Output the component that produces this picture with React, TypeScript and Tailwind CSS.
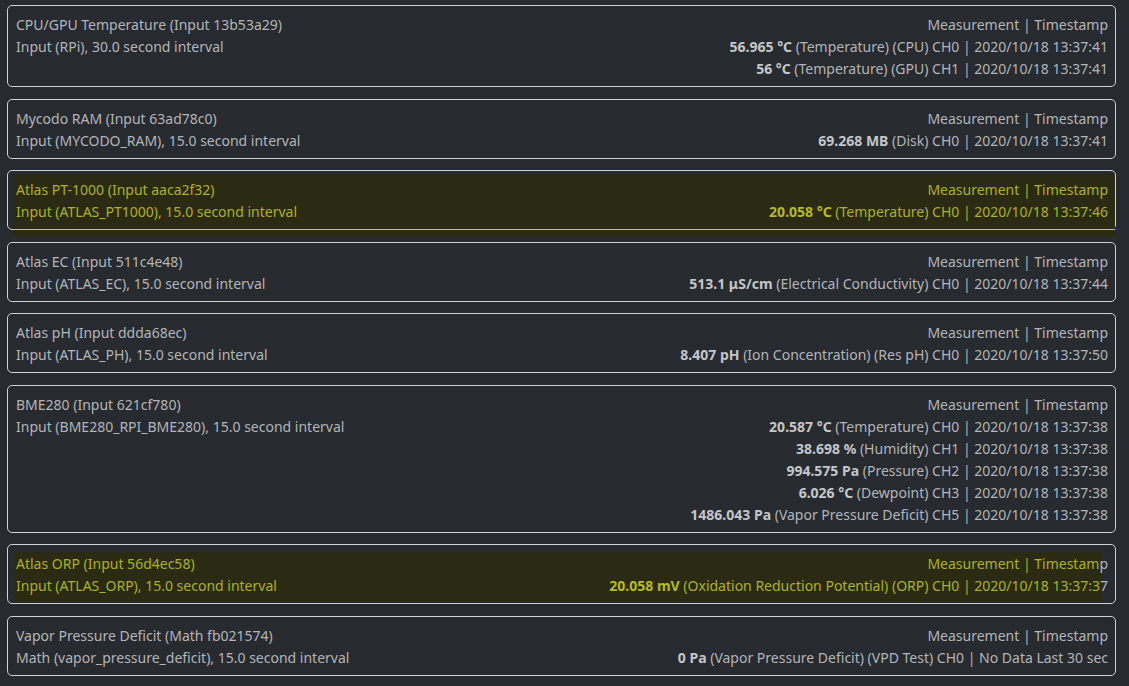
import React from "react";

interface Row {
    value: string;
    rest: string;
}

interface CardProps {
    title: string;
    subtitle: string;
    rows: Row[];
    flash?: "full" | "partial";
}

const cards: CardProps[] = [
    {
        title: "CPU/GPU Temperature (Input 13b53a29)",
        subtitle: "Input (RPi), 30.0 second interval",
        rows: [
            {value: "56.965 °C", rest: " (Temperature) (CPU) CH0 | 2020/10/18 13:37:41"},
            {value: "56 °C", rest: " (Temperature) (GPU) CH1 | 2020/10/18 13:37:41"},
        ],
    },
    {
        title: "Mycodo RAM (Input 63ad78c0)",
        subtitle: "Input (MYCODO_RAM), 15.0 second interval",
        rows: [{value: "69.268 MB", rest: " (Disk) CH0 | 2020/10/18 13:37:41"}],
    },
    {
        title: "Atlas PT-1000 (Input aaca2f32)",
        subtitle: "Input (ATLAS_PT1000), 15.0 second interval",
        rows: [{value: "20.058 °C", rest: " (Temperature) CH0 | 2020/10/18 13:37:46"}],
        flash: "full",
    },
    {
        title: "Atlas EC (Input 511c4e48)",
        subtitle: "Input (ATLAS_EC), 15.0 second interval",
        rows: [{value: "513.1 μS/cm", rest: " (Electrical Conductivity) CH0 | 2020/10/18 13:37:44"}],
    },
    {
        title: "Atlas pH (Input ddda68ec)",
        subtitle: "Input (ATLAS_PH), 15.0 second interval",
        rows: [{value: "8.407 pH", rest: " (Ion Concentration) (Res pH) CH0 | 2020/10/18 13:37:50"}],
    },
    {
        title: "BME280 (Input 621cf780)",
        subtitle: "Input (BME280_RPI_BME280), 15.0 second interval",
        rows: [
            {value: "20.587 °C", rest: " (Temperature) CH0 | 2020/10/18 13:37:38"},
            {value: "38.698 %", rest: " (Humidity) CH1 | 2020/10/18 13:37:38"},
            {value: "994.575 Pa", rest: " (Pressure) CH2 | 2020/10/18 13:37:38"},
            {value: "6.026 °C", rest: " (Dewpoint) CH3 | 2020/10/18 13:37:38"},
            {value: "1486.043 Pa", rest: " (Vapor Pressure Deficit) CH5 | 2020/10/18 13:37:38"},
        ],
    },
    {
        title: "Atlas ORP (Input 56d4ec58)",
        subtitle: "Input (ATLAS_ORP), 15.0 second interval",
        rows: [{value: "20.058 mV", rest: " (Oxidation Reduction Potential) (ORP) CH0 | 2020/10/18 13:37:3"}],
        flash: "partial",
    },
    {
        title: "Vapor Pressure Deficit (Math fb021574)",
        subtitle: "Math (vapor_pressure_deficit), 15.0 second interval",
        rows: [{value: "0 Pa", rest: " (Vapor Pressure Deficit) (VPD Test) CH0 | No Data Last 30 sec"}],
    },
];

const Card = ({title, subtitle, rows, flash}: CardProps) => {
    const text = flash ? "text-[#adb220]" : "text-[#b3b5b8]";
    const bold = flash ? "text-[#b6bc1e]" : "text-[#c4c6c8]";

    return (
        <div className="relative rounded-[5px] border border-[#cfd1d4] pl-2 pr-[7px] pt-2 pb-[6px]">
            {flash === "full" && (
                <>
                    {/* fading highlight, spills a little past the card */}
                    <div className="absolute left-[5px] right-0 top-[3px] bottom-[-8px] bg-[#2a2b12]" />
                    <div className="absolute left-[5px] right-0 bottom-[-1px] h-px bg-[#c9c93a]" />
                </>
            )}
            {flash === "partial" && (
                <div className="absolute left-[6px] right-[14px] top-[7px] bottom-[1px] bg-[#2a2b12]" />
            )}
            <div className={`relative flex justify-between leading-[22px] ${text}`}>
                <div>
                    <div>{title}</div>
                    <div>{subtitle}</div>
                </div>
                <div className="text-right">
                    <div>
                        {flash === "partial" ? (
                            <>Measurement | Timestam<span className="text-[#b3b5b8]">p</span></>
                        ) : "Measurement | Timestamp"}
                    </div>
                    {rows.map((row, i) => (
                        <div key={i} className="whitespace-nowrap">
                            <span className={`font-bold ${bold}`}>{row.value}</span>
                            {row.rest}
                            {flash === "partial" && <span className="text-[#b3b5b8]">7</span>}
                        </div>
                    ))}
                </div>
            </div>
        </div>
    );
};

export default function App() {
    return (
        <div
            className="min-h-[686px] bg-[#272a2f] pt-[5px] pl-[7px] pr-[13px] text-[14px]"
            style={{fontFamily: "'Segoe UI', 'Noto Sans', sans-serif"}}
        >
            <div className="flex flex-col gap-[11.5px]">
                {cards.map((card) => (
                    <Card key={card.title} {...card} />
                ))}
            </div>
        </div>
    );
}
